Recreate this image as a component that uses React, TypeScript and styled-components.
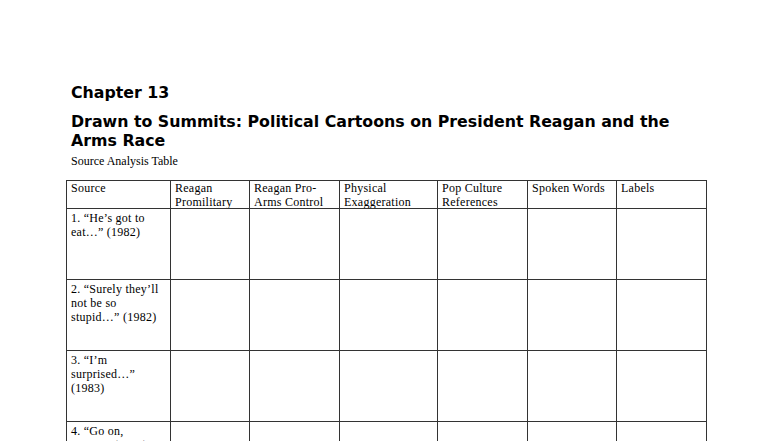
import React from "react";
import styled, { createGlobalStyle } from "styled-components";

const Global = createGlobalStyle`
  html, body { margin: 0; padding: 0; background: #ffffff; }
  body { font-family: "Liberation Serif", serif; color: #000; }
`;

const Page = styled.div`
  width: 784px;
  height: 441px;
  overflow: hidden;
  background: #fff;
  padding: 83px 0 0 66px;
  box-sizing: border-box;
`;

const Heading = styled.h1<{ $gap: number }>`
  margin: 0 0 ${(p) => p.$gap}px 0;
  padding-left: 5px;
  font-family: "DejaVu Sans", sans-serif;
  font-weight: bold;
  font-size: 15.8px;
  line-height: 19px;
  width: 610px;
`;

const Caption = styled.div`
  padding-left: 5px;
  font-family: "Liberation Serif", serif;
  font-size: 12px;
  line-height: 14px;
  margin-top: 1px;
  margin-bottom: 12px;
`;

const Table = styled.div`
  display: grid;
  grid-template-columns: 104px 79px 90px 98px 90px 89px 90px;
  grid-template-rows: 28px;
  grid-auto-rows: 71px;
  width: 641px;
  border-top: 1px solid #333;
  border-left: 1px solid #333;
  box-sizing: border-box;
`;

const Cell = styled.div<{ $head?: boolean }>`
  border-right: 1px solid #333;
  border-bottom: 1px solid #333;
  padding: ${(p) => (p.$head ? "1px" : "2px")} 4px 0 4px;
  font-family: "Liberation Serif", serif;
  font-size: 12px;
  line-height: ${(p) => (p.$head ? "13.5px" : "14px")};
  letter-spacing: 0.25px;
  overflow: hidden;
`;

const Line = styled.span`
  display: block;
  white-space: nowrap;
`;

const headers = [
  "Source",
  "Reagan Promilitary",
  "Reagan Pro-Arms Control",
  "Physical Exaggeration",
  "Pop Culture References",
  "Spoken Words",
  "Labels",
];

const sources: string[][] = [
  ["1. \u201CHe\u2019s got to", "eat\u2026\u201D (1982)"],
  ["2. \u201CSurely they\u2019ll", "not be so", "stupid\u2026\u201D (1982)"],
  ["3. \u201CI\u2019m", "surprised\u2026\u201D", "(1983)"],
  ["4. \u201CGo on,", "Yuri\u2026\u201D (1984)"],
];

export default function App() {
  return (
    <>
      <Global />
      <Page>
        <Heading $gap={10}>Chapter 13</Heading>
        <Heading $gap={4}>
          Drawn to Summits: Political Cartoons on President Reagan and the Arms Race
        </Heading>
        <Caption>Source Analysis Table</Caption>
        <Table>
          {headers.map((h) => (
            <Cell key={h} $head>
              {h}
            </Cell>
          ))}
          {sources.map((lines, i) => (
            <React.Fragment key={i}>
              <Cell>
                {lines.map((l) => (
                  <Line key={l}>{l}</Line>
                ))}
              </Cell>
              {headers.slice(1).map((h) => (
                <Cell key={h} />
              ))}
            </React.Fragment>
          ))}
        </Table>
      </Page>
    </>
  );
}
